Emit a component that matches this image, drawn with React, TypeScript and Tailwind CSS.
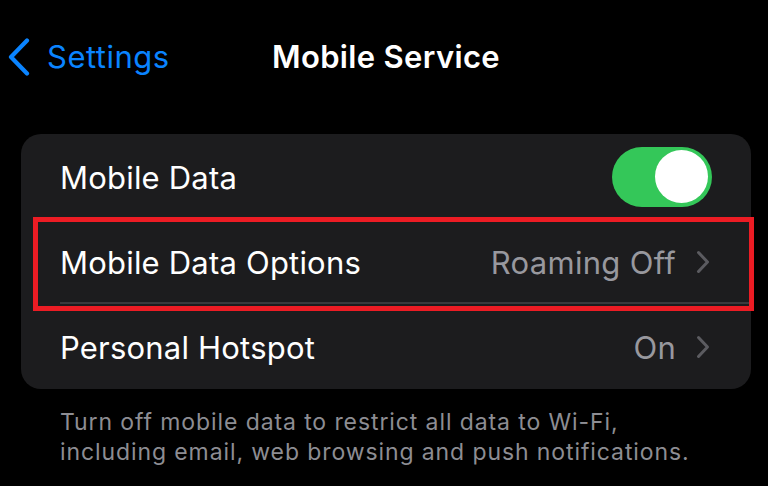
import React from "react";

function Chevron({ className }: { className?: string }) {
  return (
    <svg viewBox="0 0 14 24" className={className} fill="none">
      <path d="M2.5 2.5 L11.5 12 L2.5 21.5" stroke="currentColor" strokeWidth="3" strokeLinecap="round" strokeLinejoin="round" />
    </svg>
  );
}

function Row({ label, value, divider }: { label: string; value?: string; divider?: boolean }) {
  return (
    <div className="relative flex h-[85px] items-center pl-[39px] pr-[41px]">
      <span className="flex-1 pt-[3px] text-[31px] tracking-[0.2px] text-white">{label}</span>
      {value && (
        <div className="flex items-center gap-[20px]">
          <span className="pt-[3px] text-[31px] tracking-[0.3px] text-[#98989e]">{value}</span>
          <Chevron className="h-[24px] w-[14px] text-[#5b5b60]" />
        </div>
      )}
      {divider && <div className="absolute bottom-0 left-[39px] right-0 h-[2px] bg-[#3a3a3d]" />}
    </div>
  );
}

export default function App() {
  return (
    <div className="relative h-[486px] w-[768px] overflow-hidden bg-black" style={{ fontFamily: "Inter, 'Noto Sans', sans-serif" }}>
      <header className="grid h-[114px] grid-cols-[1fr_auto_1fr] items-center">
        <div className="flex items-center gap-[17px] pl-[8px] text-[#0a84ff]">
          <svg viewBox="0 0 22 38" className="h-[38px] w-[22px]" fill="none">
            <path d="M19 2.5 L3 19 L19 35.5" stroke="currentColor" strokeWidth="4.2" strokeLinecap="round" strokeLinejoin="round" />
          </svg>
          <span className="text-[31px] tracking-[0.5px]">Settings</span>
        </div>
        <h1 className="pl-[4px] text-[31px] font-semibold tracking-[0.35px] text-white">Mobile Service</h1>
        <div />
      </header>

      <div className="mx-[21px] mt-[20px] w-[730px] overflow-hidden rounded-[20px] bg-[#1c1c1e]">
        <div className="relative flex h-[85px] items-center pl-[39px] pr-[39px]">
          <span className="flex-1 pt-[3px] text-[31px] tracking-[0.2px] text-white">Mobile Data</span>
          <div className="flex h-[60px] w-[100px] items-center justify-end rounded-full bg-[#34c759] pr-[4px]">
            <div className="h-[53px] w-[53px] rounded-full bg-white" />
          </div>
          <div className="absolute bottom-0 left-[39px] right-0 h-[2px] bg-[#3a3a3d]" />
        </div>
        <Row label="Mobile Data Options" value="Roaming Off" divider />
        <Row label="Personal Hotspot" value="On" />
      </div>

      <p className="mt-[18px] pl-[60px] pr-[20px] text-[23px] leading-[30px] tracking-[0.9px] text-[#8d8d93]">
        Turn off mobile data to restrict all data to Wi-Fi,
        <br />
        including email, web browsing and push notifications.
      </p>

      <div className="absolute left-[33px] top-[217px] h-[94px] w-[721px] border-[5px] border-[#ec1c24]" />
    </div>
  );
}
